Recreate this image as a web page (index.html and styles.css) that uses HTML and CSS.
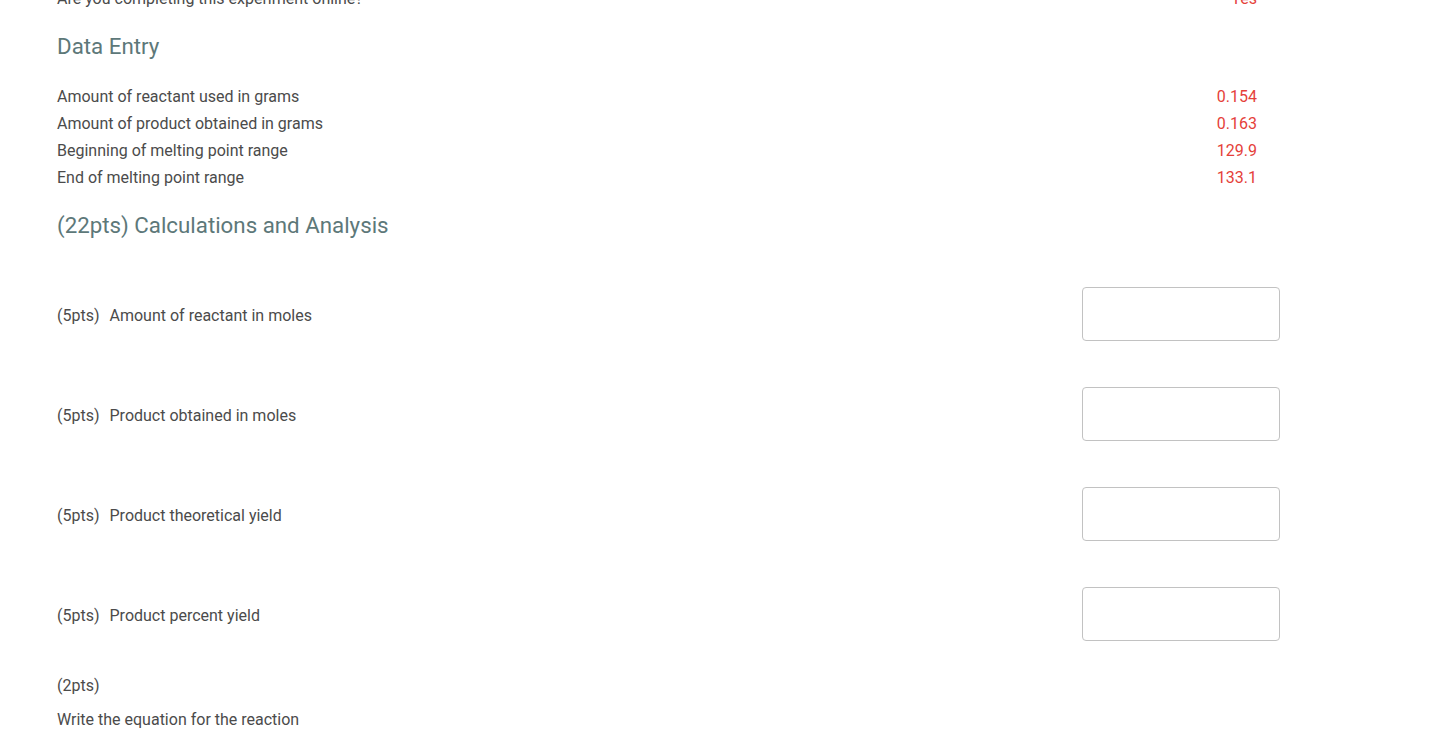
FILE: index.html
```html
<!DOCTYPE html>
<html>
<head>
<meta charset="utf-8">
<link rel="stylesheet" href="styles.css">
</head>
<body>
<div class="page">
  <div class="row top-row"><span>Are you completing this experiment online?</span><span class="val">Yes</span></div>
  <h2 class="heading h-data">Data Entry</h2>
  <div class="data">
    <div class="row"><span>Amount of reactant used in grams</span><span class="val">0.154</span></div>
    <div class="row"><span>Amount of product obtained in grams</span><span class="val">0.163</span></div>
    <div class="row"><span>Beginning of melting point range</span><span class="val">129.9</span></div>
    <div class="row"><span>End of melting point range</span><span class="val">133.1</span></div>
  </div>
  <h2 class="heading h-calc">(22pts) Calculations and Analysis</h2>
  <div class="questions">
    <div class="q"><span class="qlabel"><span class="pts">(5pts)</span>Amount of reactant in moles</span><input class="box" type="text"></div>
    <div class="q"><span class="qlabel"><span class="pts">(5pts)</span>Product obtained in moles</span><input class="box" type="text"></div>
    <div class="q"><span class="qlabel"><span class="pts">(5pts)</span>Product theoretical yield</span><input class="box" type="text"></div>
    <div class="q"><span class="qlabel"><span class="pts">(5pts)</span>Product percent yield</span><input class="box" type="text"></div>
  </div>
  <p class="plain p-pts">(2pts)</p>
  <p class="plain">Write the equation for the reaction</p>
</div>
</body>
</html>
```

FILE: styles.css
```css
html, body {
  margin: 0;
  padding: 0;
  background: #ffffff;
  overflow: hidden;
}
body {
  font-family: Roboto, "Liberation Sans", sans-serif;
  font-size: 16px;
  color: #4b4b4b;
}
.page {
  width: 1223px;
  margin-left: 57px;
  margin-top: -15.5px;
}
.row {
  display: flex;
  justify-content: space-between;
  line-height: 27px;
  height: 27px;
  padding-right: 23px;
}
.val {
  color: #e53f3a;
}
.heading {
  margin: 0;
  font-weight: 400;
  font-size: 22.3px;
  line-height: 32px;
  color: #5d7879;
}
.h-data {
  margin-top: 18px;
}
.data {
  margin-top: 21px;
}
.h-calc {
  margin-top: 18px;
}
.questions {
  margin-top: 46.5px;
  display: flex;
  flex-direction: column;
  gap: 46px;
}
.q {
  display: flex;
  justify-content: space-between;
  align-items: center;
  height: 54px;
}
.qlabel {
  line-height: 27px;
  padding-top: 2px;
}
.pts {
  margin-right: 10px;
}
.box {
  width: 198px;
  height: 54px;
  box-sizing: border-box;
  border: 1px solid #c2c2c2;
  border-radius: 4px;
  background: #fff;
  margin: 0;
  padding: 0 10px;
  font: inherit;
}
.plain {
  margin: 0;
  line-height: 27px;
}
.p-pts {
  margin-top: 30.5px;
  margin-bottom: 7px;
}
```
